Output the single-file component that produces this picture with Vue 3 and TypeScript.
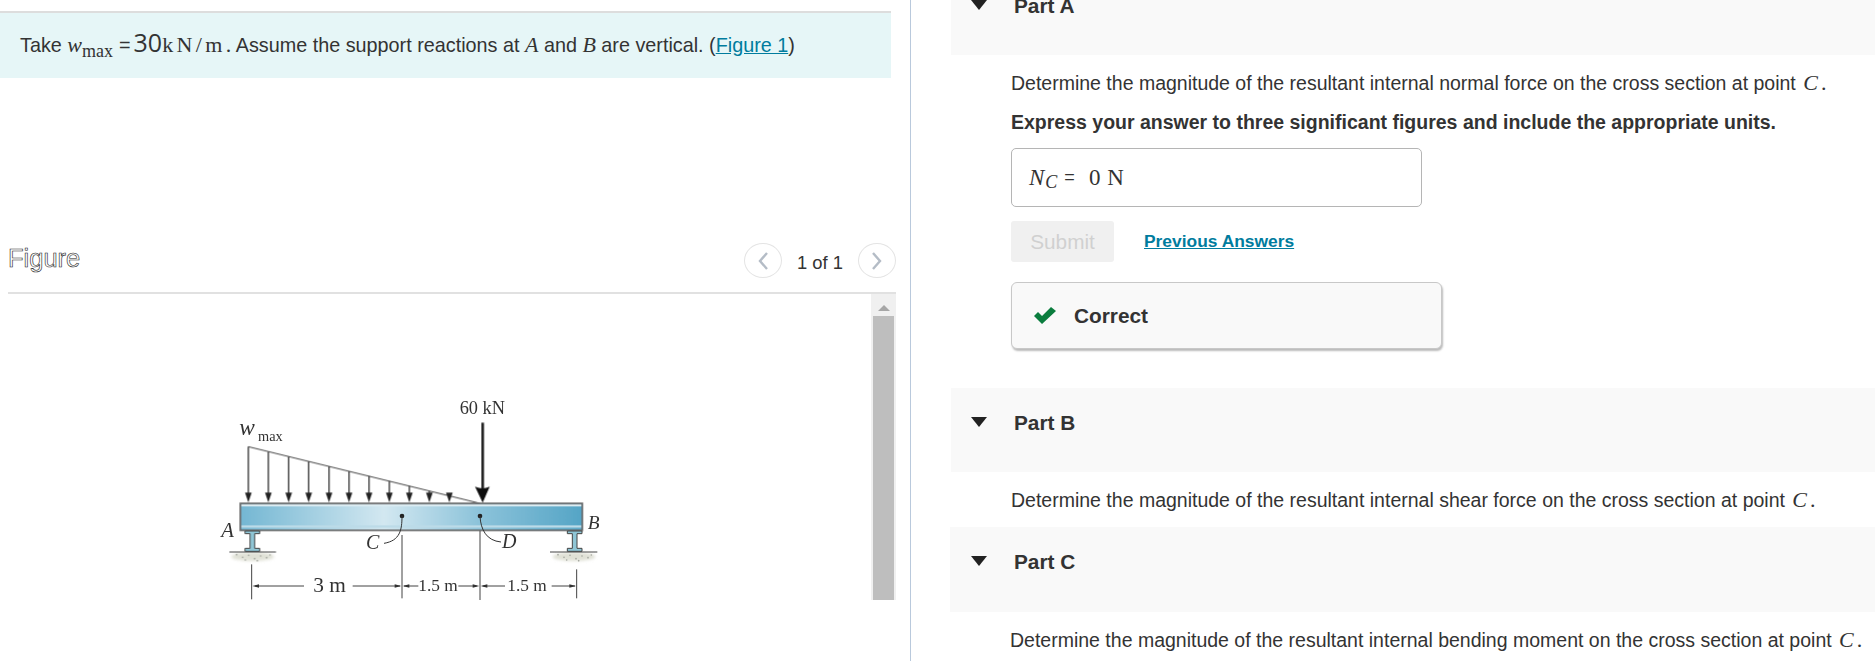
<script setup lang="ts">
// load arrows along the triangular distributed load
const loadX = [145, 205, 266, 326, 387, 447, 507, 568, 628, 688, 748];
const loadArrows = loadX.map((x) => ({
  x,
  top: 200 + ((x - 145) / (840 - 145)) * 170,
}));

// speckles in the ground under each support
const speckles = [
  [-48, 6], [-30, 14], [-12, 8], [6, 18], [24, 10], [42, 15], [-22, 22], [14, 24], [52, 7],
];
</script>

<template>
  <div class="page">
    <section class="left">
      <div class="intro">
        Take <i class="math">w</i><sub class="math-sub">max</sub>
        <span class="eq">=</span><span class="big-num">30</span><span class="math unit">kN/m</span><span class="math">.</span>
        Assume the support reactions at <i class="math">A</i> and <i class="math">B</i> are vertical.
        (<a class="link">Figure 1</a>)
      </div>

      <div class="figure">
        <header class="figure-head">
          <h2 class="figure-title">Figure</h2>
          <div class="pager">
            <span class="circle">
              <svg width="14" height="22" viewBox="0 0 14 22"><path d="M11 3 4 11l7 8" fill="none" stroke="#b4bcc6" stroke-width="2.4" /></svg>
            </span>
            <span class="pager-text">1 of 1</span>
            <span class="circle">
              <svg width="14" height="22" viewBox="0 0 14 22"><path d="M3 3l7 8-7 8" fill="none" stroke="#b4bcc6" stroke-width="2.4" /></svg>
            </span>
          </div>
        </header>
        <div class="figure-body">
          <svg class="diagram" width="420" height="240" viewBox="0 0 1260 720">
            <defs>
              <linearGradient id="beam" x1="0" x2="1" y1="0" y2="0">
                <stop offset="0" stop-color="#74b7d3" />
                <stop offset="0.42" stop-color="#d3e8f1" />
                <stop offset="0.7" stop-color="#8cc3da" />
                <stop offset="1" stop-color="#55a5c6" />
              </linearGradient>
              <filter id="soft" x="-5%" y="-5%" width="110%" height="110%">
                <feGaussianBlur stdDeviation="1.6" />
              </filter>
              <filter id="ground" x="-20%" y="-50%" width="140%" height="200%">
                <feGaussianBlur stdDeviation="4" />
              </filter>
            </defs>
            <g filter="url(#soft)">
              <!-- distributed load -->
              <path d="M145 200 840 370" stroke="#444" stroke-width="3" fill="none" />
              <g v-for="a in loadArrows" :key="a.x">
                <path :d="`M${a.x} ${a.top}V345`" stroke="#333" stroke-width="4" />
                <path :d="`M${a.x - 10} 338h20l-10 29z`" fill="#222" />
              </g>

              <!-- 60 kN -->
              <path d="M848 128V330" stroke="#222" stroke-width="8" />
              <path d="M825 320q23 10 44 0l-21 48z" fill="#111" />

              <!-- beam -->
              <rect x="121" y="370" width="1026" height="81" fill="url(#beam)" stroke="#666" stroke-width="5" />
              <rect x="124" y="373" width="1020" height="6" fill="#dcecf2" />
              <rect x="124" y="436" width="1020" height="7" fill="#bcdbe8" />

              <!-- supports -->
              <g v-for="s in [{ cx: 158, x: 135, l: 88, r: 228 }, { cx: 1122, x: 1102, l: 1050, r: 1192 }]" :key="s.cx">
                <ellipse :cx="s.cx" cy="530" rx="64" ry="13" fill="#e0e1d6" filter="url(#ground)" />
                <circle v-for="d in speckles" :key="d[0]" :cx="s.cx + d[0]" :cy="518 + d[1]" r="2.5" fill="#a5a8a0" />
                <path :d="`M${s.l} 516H${s.r}`" stroke="#444" stroke-width="3" />
                <path :d="`M${s.x} 453h44v8h-15v44h15v9h-44v-9h15v-44h-15z`" fill="#8fc6d6" stroke="#444" stroke-width="3" />
              </g>

              <!-- section points -->
              <circle cx="606" cy="408" r="7" fill="#222" />
              <circle cx="840" cy="408" r="7" fill="#222" />
              <path d="M606 408C606 450 600 482 552 490" stroke="#333" stroke-width="3" fill="none" />
              <path d="M840 408C842 450 860 482 903 486" stroke="#333" stroke-width="3" fill="none" />

              <!-- dimensions -->
              <path d="M155 553V658M606 465V655M840 452V660M1130 568V655" stroke="#444" stroke-width="3" fill="none" />
              <path d="M165 618H312M458 618H600M612 618H655M775 618H830M848 618H915M1055 618H1125" stroke="#444" stroke-width="3" fill="none" />
              <path d="M157 618l20-5v10zM604 618l-20-5v10zM608 618l20-5v10zM838 618l-20-5v10zM842 618l20-5v10zM1128 618l-20-5v10z" fill="#333" />

              <text x="847" y="103" text-anchor="middle" class="dg" font-size="55">60 kN</text>
              <text x="118" y="165" class="dg dg-i" font-size="70">w</text>
              <text x="174" y="183" class="dg" font-size="43">max</text>
              <text x="64" y="470" class="dg dg-i" font-size="62">A</text>
              <text x="1163" y="446" class="dg dg-i" font-size="58">B</text>
              <text x="498" y="507" class="dg dg-i" font-size="60">C</text>
              <text x="906" y="503" class="dg dg-i" font-size="60">D</text>
              <text x="340" y="637" class="dg" font-size="64">3 m</text>
              <text x="655" y="634" class="dg" font-size="52">1.5 m</text>
              <text x="922" y="634" class="dg" font-size="52">1.5 m</text>
            </g>
          </svg>
          <div class="scrollbar">
            <span class="scroll-up"></span>
            <span class="scroll-thumb"></span>
          </div>
        </div>
      </div>
    </section>

    <section class="right">
      <div class="part-head">
        <span class="caret"></span>
        <span class="part-title">Part A</span>
      </div>
      <div class="part-body part-a">
        <p class="question">Determine the magnitude of the resultant internal normal force on the cross section at point <i class="math pt">C</i><span class="math">.</span></p>
        <p class="instruction">Express your answer to three significant figures and include the appropriate units.</p>
        <div class="answer">
          <i class="math n">N</i><sub class="math-sub c">C</sub>
          <span class="eq2">=</span>
          <span class="math val">0 N</span>
        </div>
        <div class="actions">
          <button class="submit" type="button">Submit</button>
          <a class="link prev">Previous Answers</a>
        </div>
        <div class="feedback">
          <svg width="22" height="17" viewBox="0 0 22 17"><path d="M0 9l4-4 4 4L17 0l5 4L8 17z" fill="#0b7d3e" /></svg>
          <span>Correct</span>
        </div>
      </div>

      <div class="part-head">
        <span class="caret"></span>
        <span class="part-title">Part B</span>
      </div>
      <div class="part-body part-b">
        <p class="question">Determine the magnitude of the resultant internal shear force on the cross section at point <i class="math pt">C</i><span class="math">.</span></p>
      </div>

      <div class="part-head part-c">
        <span class="caret"></span>
        <span class="part-title">Part C</span>
      </div>
      <div class="part-body part-c-body">
        <p class="question">Determine the magnitude of the resultant internal bending moment on the cross section at point <i class="math pt">C</i><span class="math">.</span></p>
      </div>
    </section>
  </div>
</template>

<style>
html,
body {
  margin: 0;
  background: #fff;
  overflow: hidden;
}
</style>

<style scoped>
.page {
  display: flex;
  align-items: flex-start;
  height: 670px;
  overflow: hidden;
  font-family: "Liberation Sans", Arial, sans-serif;
  font-size: 19.5px;
  color: #333;
}

.left {
  width: 911px;
  height: 661px;
  flex: none;
  padding-top: 11px;
  box-sizing: border-box;
  border-right: 1px solid #b9c9dc;
}

.intro {
  width: 891px;
  height: 67px;
  box-sizing: border-box;
  padding-left: 20px;
  font-size: 19.8px;
  line-height: 58px;
  background: #e6f6f7;
  border-top: 2px solid #ddd;
  white-space: nowrap;
}

.math {
  font-family: "Liberation Serif", "DejaVu Serif", serif;
  font-size: 22px;
}

.pt {
  margin-left: 2px;
  margin-right: 3px;
}

.math-sub {
  font-family: "Liberation Serif", "DejaVu Serif", serif;
  font-size: 18px;
  line-height: 0;
  vertical-align: -5px;
}

.eq {
  margin-left: 6px;
}

.big-num {
  font-family: "Open Sans", sans-serif;
  font-size: 25px;
  margin-left: 3px;
}

.unit {
  letter-spacing: 3.4px;
}

.link {
  color: #007c9e;
  text-decoration: underline;
}

.figure {
  margin: 165px 14px 0 8px;
}

.figure-head {
  display: flex;
  align-items: center;
  justify-content: space-between;
  padding-bottom: 14px;
  border-bottom: 2px solid #e1e1e1;
}

.figure-title {
  margin: -4px 0 0;
  font-size: 25.5px;
  font-weight: 400;
  color: #fff;
  -webkit-text-stroke: 0.6px #222;
}

.pager {
  display: flex;
  align-items: center;
  gap: 15px;
}

.pager-text {
  padding-top: 4px;
  font-size: 18.4px;
}

.circle {
  display: flex;
  align-items: center;
  justify-content: center;
  width: 38px;
  height: 35px;
  box-sizing: border-box;
  border: 1px solid #e4e4e4;
  border-radius: 50%;
}

.figure-body {
  display: flex;
  justify-content: space-between;
  align-items: flex-start;
}

.diagram {
  display: block;
  margin: 86px 0 0 192px;
}

.dg {
  font-family: "Liberation Serif", serif;
  fill: #333;
}

.dg-i {
  font-style: italic;
}

.scrollbar {
  display: flex;
  flex-direction: column;
  align-items: center;
  width: 25px;
  height: 306px;
  background: #f0f0f0;
}

.scroll-up {
  width: 0;
  height: 0;
  margin: 11px 0 5px;
  border-left: 6px solid transparent;
  border-right: 6px solid transparent;
  border-bottom: 6px solid #a6a6a6;
}

.scroll-thumb {
  width: 21px;
  flex: 1;
  background: #bebebe;
}

.right {
  flex: 1;
  min-width: 0;
  margin-top: -29px;
}

.part-head {
  display: flex;
  align-items: flex-start;
  height: 84px;
  box-sizing: border-box;
  margin-left: 40px;
  padding: 24px 0 0 20px;
  background: #f9f9f9;
}

.caret {
  width: 0;
  height: 0;
  margin-top: 5px;
  border-left: 8px solid transparent;
  border-right: 8px solid transparent;
  border-top: 10px solid #222;
}

.part-title {
  margin-left: 27px;
  font-size: 20.8px;
  font-weight: 700;
  line-height: 22px;
}

.part-body {
  padding-left: 100px;
}

.question {
  margin: 0;
  line-height: 24px;
  white-space: nowrap;
}

.part-a {
  height: 333px;
  padding-top: 16px;
  box-sizing: border-box;
}

.instruction {
  margin: 15px 0 0;
  font-weight: 700;
  line-height: 24px;
}

.answer {
  display: flex;
  align-items: center;
  width: 411px;
  height: 59px;
  margin-top: 14px;
  padding-left: 17px;
  box-sizing: border-box;
  background: #fff;
  border: 1px solid #b5b5b5;
  border-radius: 5px;
}

.n {
  font-size: 23px;
}

.c {
  font-style: italic;
  vertical-align: baseline;
  margin: 8px 0 0 1px;
}

.eq2 {
  margin: 0 14px 0 7px;
  font-size: 18px;
}

.val {
  font-size: 23px;
  letter-spacing: 0.5px;
}

.actions {
  display: flex;
  align-items: center;
  gap: 30px;
  margin-top: 14px;
}

.submit {
  width: 103px;
  height: 41px;
  padding: 0;
  font: inherit;
  font-size: 20.8px;
  color: #d0d0d0;
  background: #f0f0f0;
  border: none;
  border-radius: 3px;
}

.prev {
  font-weight: 700;
  font-size: 17.4px;
}

.feedback {
  display: flex;
  align-items: center;
  gap: 18px;
  width: 431px;
  height: 67px;
  margin-top: 20px;
  padding-left: 22px;
  box-sizing: border-box;
  font-size: 20.8px;
  font-weight: 700;
  background: #f9f9f9;
  border: 1px solid #c8c8c8;
  border-radius: 6px;
  box-shadow: 1px 2px 2px #bbb;
}

.part-b {
  height: 55px;
  padding-top: 16px;
  box-sizing: border-box;
}

.part-c {
  margin-left: 39px;
  height: 85px;
  padding-left: 21px;
}

.part-c-body {
  padding-left: 99px;
  padding-top: 16px;
}
</style>
